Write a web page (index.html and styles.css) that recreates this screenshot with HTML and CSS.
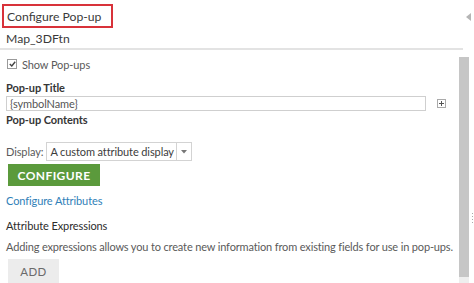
FILE: index.html
```html
<!DOCTYPE html>
<html lang="en">
<head>
<meta charset="UTF-8">
<link rel="stylesheet" href="styles.css">
</head>
<body>
<div class="pane">
	<div class="head">
		<div class="head-text">
			<div class="title-box">Configure Pop-up</div>
			<div class="layer-name">Map_3DFtn</div>
		</div>
		<div class="collapse">
			<svg width="6" height="8" viewBox="0 0 6 8"><path d="M5 0 L0 4 L5 8 Z" fill="#b5b5b5"/></svg>
		</div>
	</div>
	<div class="rule"></div>
	<div class="body">
		<div class="content">
			<label class="check-row"><span class="checkbox"><svg width="7" height="6" viewBox="0 0 7 6"><path d="M0.8 3 L2.8 5 L6.2 0.8" fill="none" stroke="#444" stroke-width="1.4"/></svg></span>Show Pop-ups</label>

			<div class="label label-title">Pop-up Title</div>
			<div class="title-row">
				<div class="text-input">{symbolName}</div>
				<span class="plus-box"><svg width="5" height="5" viewBox="0 0 5 5"><path d="M2.5 0 V5 M0 2.5 H5" stroke="#555" stroke-width="1"/></svg></span>
			</div>
			<div class="label">Pop-up Contents</div>

			<div class="display-row">
				<span>Display:</span>
				<div class="select">
					<span class="select-value">A custom attribute display</span>
					<span class="select-arrow"><svg width="6" height="4" viewBox="0 0 6 4"><path d="M0 0 H6 L3 3.5 Z" fill="#777"/></svg></span>
				</div>
			</div>
			<div class="btn btn-green">CONFIGURE</div>
			<div class="link">Configure Attributes</div>

			<div class="label label-expr">Attribute Expressions</div>
			<div class="hint">Adding expressions allows you to create new information from existing fields for use in pop-ups.</div>
			<div class="btn btn-gray">ADD</div>
		</div>
		<div class="scrollbar"><div class="thumb"></div></div>
		<div class="splitter">
			<span></span><span></span><span></span><span></span>
		</div>
	</div>
</div>
</body>
</html>
```

FILE: styles.css
```css
body, div, span, label {
	margin: 0;
	padding: 0;
}

body {
	background: #fff;
	font-family: Lato, "Open Sans", sans-serif;
	color: #4c4c4c;
	font-size: 11px;
	letter-spacing: -0.1px;
	overflow: hidden;
}

/* Header */

.head {
	display: flex;
	justify-content: space-between;
	padding: 4px 0 0 2px;
	width: 470px;
}

.title-box {
	display: inline-block;
	border: 2px solid #d8323a;
	padding: 3px 10px 2px 3px;
	font-size: 12.2px;
	line-height: 15px;
	color: #3a3a3a;
	letter-spacing: 0;
}

.layer-name {
	padding: 4px 0 0 4px;
	font-size: 12.2px;
	line-height: 14px;
	color: #3a3a3a;
	letter-spacing: 0;
}

.collapse {
	padding-top: 6px;
}

.rule {
	margin-top: 2px;
	width: 463px;
	height: 2px;
	background: #e3e3e3;
}

/* Body */

.body {
	display: flex;
	padding-top: 5px;
}

.content {
	width: 453px;
	padding-left: 6px;
}

.scrollbar {
	width: 10px;
	height: 226px;
	margin-top: 2px;
	background: #eeeeee;
}

.thumb {
	width: 10px;
	height: 220px;
	background: #c6c6c6;
}

.splitter {
	display: flex;
	flex-direction: column;
	gap: 2px;
	padding: 158px 0 0 3px;
}

.splitter span {
	width: 1px;
	height: 1px;
	background: #aaa;
}

.check-row {
	display: flex;
	align-items: center;
	gap: 5px;
	height: 16px;
	padding-top: 1px;
	color: #5a5a5a;
}

.checkbox {
	display: flex;
	align-items: center;
	justify-content: center;
	width: 8px;
	height: 8px;
	margin-left: 1px;
	border: 1px solid #9a9a9a;
}

.label {
	font-weight: bold;
	color: #363636;
	line-height: 14px;
}

.label-title {
	margin-top: 9px;
}

.title-row {
	display: flex;
	align-items: center;
	margin-top: 1px;
	margin-bottom: 2px;
}

.text-input {
	width: 412px;
	height: 13px;
	padding: 0 3px;
	border: 1px solid #cfcfcf;
	line-height: 13px;
	color: #555;
}

.plus-box {
	display: flex;
	align-items: center;
	justify-content: center;
	width: 7px;
	height: 7px;
	margin-left: 11px;
	border: 1px solid #aaa;
}

.display-row {
	display: flex;
	align-items: center;
	gap: 3px;
	margin-top: 15px;
	color: #5a5a5a;
}

.select {
	display: flex;
	height: 17px;
	border: 1px solid #d3d3d3;
}

.select-value {
	padding: 0 2px 0 3px;
	line-height: 17px;
	color: #3c3c3c;
}

.select-arrow {
	display: flex;
	align-items: center;
	justify-content: center;
	width: 14px;
	border-left: 1px solid #d3d3d3;
}

.btn {
	display: flex;
	align-items: center;
	justify-content: center;
	margin-left: 2px;
	font-weight: bold;
	letter-spacing: 0.4px;
}

.btn-green {
	width: 92px;
	height: 22px;
	margin-top: 3px;
	background: #5b9a3c;
	color: #fff;
	font-size: 12px;
}

.link {
	margin-top: 8px;
	color: #2f80b8;
	line-height: 14px;
}

.label-expr {
	margin-top: 11px;
	font-weight: normal;
	color: #2c2c2c;
}

.hint {
	margin-top: 7px;
	line-height: 14px;
	color: #5a5a5a;
	letter-spacing: -0.15px;
}

.btn-gray {
	width: 51px;
	height: 25px;
	margin-top: 5px;
	background: #ececec;
	color: #6a6a6a;
	font-weight: normal;
	font-size: 11.5px;
}
```
